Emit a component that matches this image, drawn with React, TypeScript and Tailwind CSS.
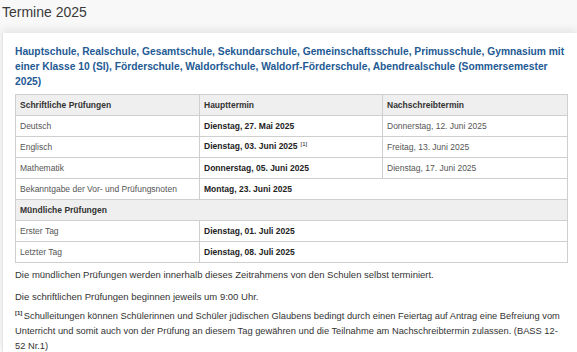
import React from "react";

const F = { fontFamily: '"Liberation Sans", Arial, sans-serif' };

type Row = { label: string; main: string; sup?: boolean; alt?: string; span?: boolean };

const rows1: Row[] = [
  { label: "Deutsch", main: "Dienstag, 27. Mai 2025", alt: "Donnerstag, 12. Juni 2025" },
  { label: "Englisch", main: "Dienstag, 03. Juni 2025", sup: true, alt: "Freitag, 13. Juni 2025" },
  { label: "Mathematik", main: "Donnerstag, 05. Juni 2025", alt: "Dienstag, 17. Juni 2025" },
  { label: "Bekanntgabe der Vor- und Prüfungsnoten", main: "Montag, 23. Juni 2025", span: true },
];

const rows2: Row[] = [
  { label: "Erster Tag", main: "Dienstag, 01. Juli 2025", span: true },
  { label: "Letzter Tag", main: "Dienstag, 08. Juli 2025", span: true },
];

const td = "border border-[#cfcfcf] h-[21px] px-[4px] py-0 align-middle";

function BodyRow({ r }: { r: Row }) {
  return (
    <tr>
      <td className={`${td} text-[#555]`}>{r.label}</td>
      <td className={`${td} font-bold text-[#222]`} colSpan={r.span ? 2 : 1}>
        {r.main}
        {r.sup && <span className="font-normal text-[6px] ml-[3px] relative -top-[3px]">[1]</span>}
      </td>
      {!r.span && <td className={`${td} text-[#555]`}>{r.alt}</td>}
    </tr>
  );
}

export default function App() {
  return (
    <div style={F} className="w-[577px] h-[352px] bg-[#f8f8f8] overflow-hidden">
      <div className="h-[33px] pl-[2px] pt-[1px] text-[14px] leading-[22px] text-[#3a3a3a]">Termine 2025</div>
      <div className="ml-[2px] bg-white border-l border-[#e4e4e4] h-[319px] pl-[12px] pr-[11px] pt-[11px] shadow-[0_-4px_7px_rgba(0,0,0,0.07)]">
        <h2 className="text-[10.25px] leading-[15px] font-bold text-[#245a94]">
          Hauptschule, Realschule, Gesamtschule, Sekundarschule, Gemeinschaftsschule, Primusschule, Gymnasium mit
          einer Klasse 10 (SI), Förderschule, Waldorfschule, Waldorf-Förderschule, Abendrealschule (Sommersemester
          2025)
        </h2>
        <table className="mt-[5px] w-[552px] table-fixed border-collapse text-[8.5px] leading-[11px]">
          <colgroup>
            <col className="w-[184px]" />
            <col className="w-[183px]" />
            <col className="w-[185px]" />
          </colgroup>
          <tbody>
            <tr className="bg-[#efefef]">
              <td className={`${td} font-bold text-[#333]`}>Schriftliche Prüfungen</td>
              <td className={`${td} font-bold text-[#333]`}>Haupttermin</td>
              <td className={`${td} font-bold text-[#333]`}>Nachschreibtermin</td>
            </tr>
            {rows1.map((r) => (
              <BodyRow key={r.label} r={r} />
            ))}
            <tr className="bg-[#efefef]">
              <td className={`${td} font-bold text-[#333]`} colSpan={3}>
                Mündliche Prüfungen
              </td>
            </tr>
            {rows2.map((r) => (
              <BodyRow key={r.label} r={r} />
            ))}
          </tbody>
        </table>
        <div className="text-[9.5px] leading-[15px] text-[#333]">
          <p className="mt-[4px]">
            Die mündlichen Prüfungen werden innerhalb dieses Zeitrahmens von den Schulen selbst terminiert.
          </p>
          <p className="mt-[7px]">Die schriftlichen Prüfungen beginnen jeweils um 9:00 Uhr.</p>
          <p className="mt-[5px] text-[9.3px]">
            <span className="inline-block align-top leading-[9px] font-bold text-[6px] mr-[1.5px]">[1]</span>Schulleitungen können
            Schülerinnen und Schüler jüdischen Glaubens bedingt durch einen Feiertag auf Antrag eine Befreiung vom
            Unterricht und somit auch von der Prüfung an diesem Tag gewähren und die Teilnahme am Nachschreibtermin
            zulassen. (BASS 12-52 Nr.1)
          </p>
        </div>
      </div>
    </div>
  );
}
